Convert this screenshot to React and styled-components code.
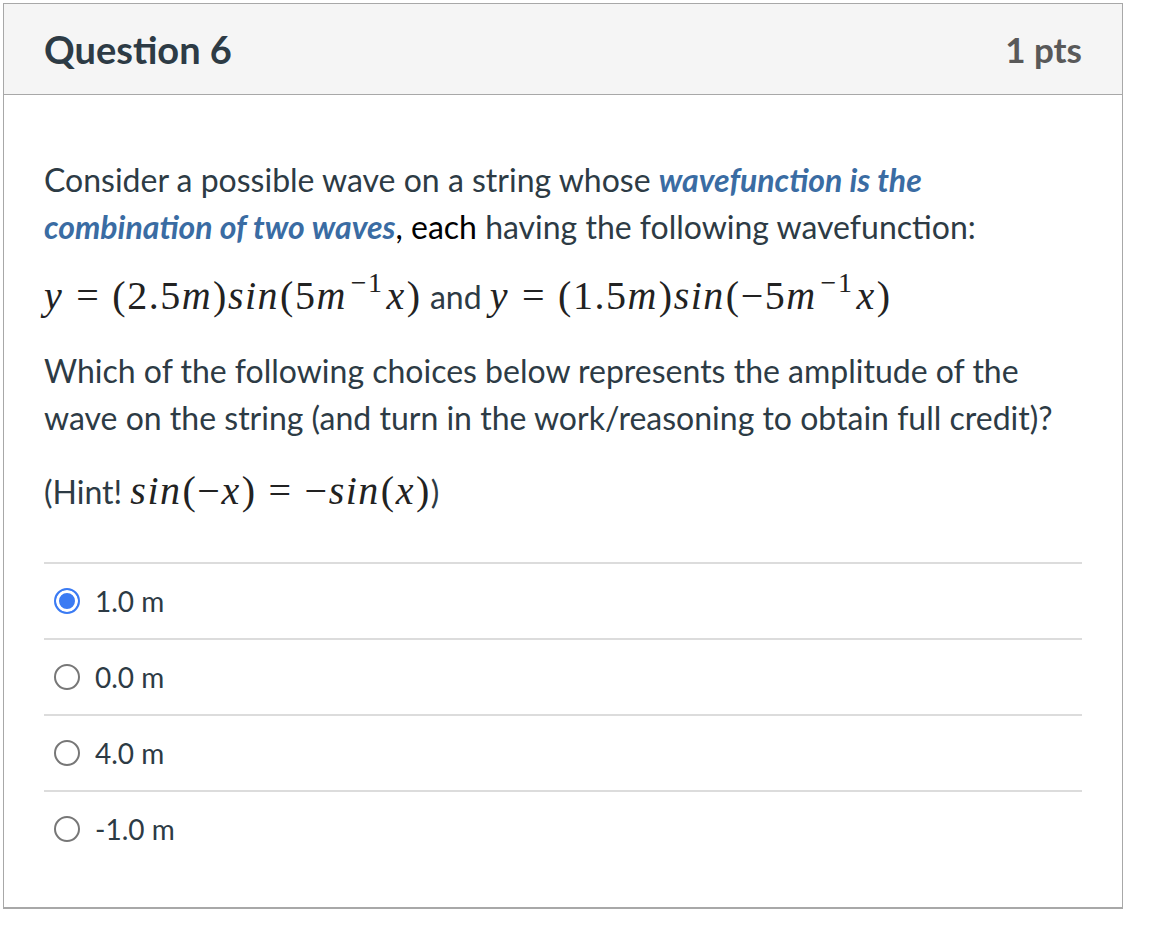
import React from "react";
import styled, { createGlobalStyle } from "styled-components";

const GlobalStyle = createGlobalStyle`
  body {
    margin: 0;
    background: #fff;
    font-family: Lato, "Noto Sans", sans-serif;
    color: #2d3b45;
  }
`;

const choices = [
  { label: "1.0 m", checked: true },
  { label: "0.0 m" },
  { label: "4.0 m" },
  { label: "-1.0 m" },
];

const App = () => {
  return (
    <Page>
      <GlobalStyle />
      <Card>
        <Header>
          <Title>Question 6</Title>
          <Points>1 pts</Points>
        </Header>
        <Body>
          <Para gap={23}>
            Consider a possible wave on a string whose{" "}
            <Emph>wavefunction is the combination of two waves</Emph>
            <Black>, each</Black> having the following wavefunction:
          </Para>
          <Para>
            <Math>
              <I>y</I>
              <Op>=</Op>(2.5<I>m</I>)<I>sin</I>(5<I>m</I>
              <Sup>−1</Sup>
              <I>x</I>)
            </Math>{" "}
            and{" "}
            <Math>
              <I>y</I>
              <Op>=</Op>(1.5<I>m</I>)<I>sin</I>(−5<I>m</I>
              <Sup>−1</Sup>
              <I>x</I>)
            </Math>
          </Para>
          <Para>
            Which of the following choices below represents the amplitude of
            the wave on the string (and turn in the work/reasoning to obtain
            full credit)?
          </Para>
          <Para>
            (Hint!{" "}
            <Math>
              <I>sin</I>(−<I>x</I>)<Op>=</Op>−<I>sin</I>(<I>x</I>)
            </Math>
            )
          </Para>
          <Answers>
            {choices.map((c) => (
              <Answer key={c.label}>
                <Radio checked={c.checked} />
                <AnswerText>{c.label}</AnswerText>
              </Answer>
            ))}
          </Answers>
        </Body>
      </Card>
    </Page>
  );
};

export default App;

const Page = styled.div`
  padding: 3px 0 0 3px;
  width: 1120px;
`;

const Card = styled.div`
  border: 1px solid #a8a8a8;
  border-bottom-width: 2px;
`;

const Header = styled.div`
  height: 90px;
  background: #f5f5f5;
  border-bottom: 1px solid #a8a8a8;
  display: flex;
  align-items: center;
  justify-content: space-between;
  padding: 0 40px;
`;

const Title = styled.h2`
  margin: 0;
  font-size: 38px;
  font-weight: 700;
  color: #2d3b45;
`;

const Points = styled.div`
  font-size: 35px;
  font-weight: 700;
  color: #595959;
`;

const Body = styled.div`
  padding: 61px 40px 41px;
`;

const Para = styled.p`
  margin: 0 0 ${(p) => p.gap ?? 27}px;
  font-size: 32px;
  line-height: 47px;
`;

const Emph = styled.strong`
  font-style: italic;
  color: #3a6ca3;
`;

const Black = styled.span`
  color: #000;
`;

const Math = styled.span`
  font-family: "Liberation Serif", "DejaVu Serif", serif;
  font-size: 40px;
  line-height: 1;
  letter-spacing: 1.5px;
  color: #222;
`;

const I = styled.i`
  font-style: italic;
  margin-right: 1px;
`;

const Op = styled.span`
  padding: 0 12px;
`;

const Sup = styled.sup`
  font-size: 28px;
  line-height: 0;
  vertical-align: 17px;
  margin: 0 3px 0 3px;
`;

const Answers = styled.div`
  margin-top: 47px;
  border-top: 2px solid #dcdcdc;
`;

const Answer = styled.div`
  height: 74px;
  display: flex;
  align-items: center;
  padding-left: 10px;
  & + & {
    border-top: 2px solid #dcdcdc;
  }
`;

const Radio = styled.span`
  width: 26px;
  height: 26px;
  box-sizing: border-box;
  border-radius: 50%;
  border: 2px solid ${(p) => (p.checked ? "#3b7bf3" : "#777")};
  background: ${(p) => (p.checked ? "#3b7bf3" : "#fff")};
  box-shadow: ${(p) => (p.checked ? "inset 0 0 0 3px #fff" : "none")};
  flex-shrink: 0;
`;

const AnswerText = styled.span`
  margin-left: 15px;
  font-size: 28px;
  color: #2d3b45;
`;
